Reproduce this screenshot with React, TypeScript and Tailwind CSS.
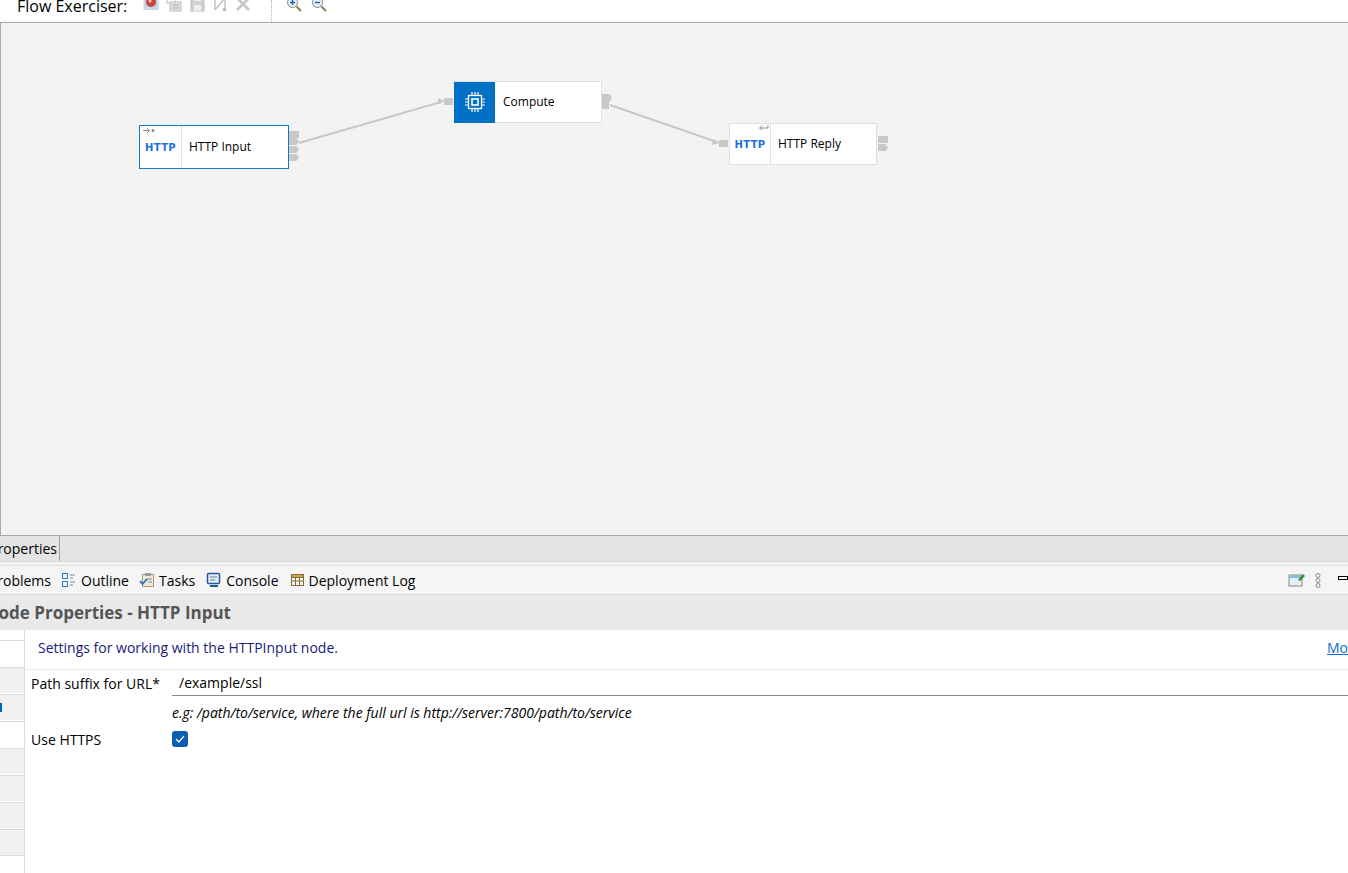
const font = { fontFamily: '"Open Sans", "Noto Sans", sans-serif' };

const DisabledIcon = ({ children }: { children: React.ReactNode }) => (
  <svg width="16" height="16" viewBox="0 0 16 16" className="shrink-0">
    {children}
  </svg>
);

const Toolbar = () => (
  <div className="h-[23px] bg-white border-b border-[#a9a9a9] overflow-hidden flex items-end relative">
    <div className="w-[4px] h-full" />
    <div className="flex items-end h-full pl-[13px] w-[268px] border-r border-dotted border-[#b5b5b5]">
      <span className="text-[16px] leading-[22px] text-black whitespace-nowrap w-[126px] mb-[5px]">Flow Exerciser:</span>
      <div className="flex gap-[7px] mb-[10px]">
        <DisabledIcon>
          <rect x="0.5" y="1" width="15" height="13" fill="#c9d5e8" />
          <circle cx="8" cy="6" r="5" fill="#c8443f" />
          <circle cx="7" cy="5" r="1.5" fill="#f4c6c2" />
        </DisabledIcon>
        <DisabledIcon>
          <rect x="1" y="1" width="8" height="6" fill="none" stroke="#bdbdbd" />
          <rect x="4" y="6" width="11" height="9" fill="#e3e3e3" stroke="#bdbdbd" />
          <path d="M6 9h7M6 12h7" stroke="#a9a9a9" />
        </DisabledIcon>
        <DisabledIcon>
          <rect x="2" y="1" width="13" height="14" fill="#d0d0d0" stroke="#bdbdbd" />
          <rect x="5" y="9" width="7" height="6" fill="#eeeeee" />
          <rect x="5" y="1" width="7" height="4" fill="#eeeeee" />
        </DisabledIcon>
        <DisabledIcon>
          <path d="M3 1v13M3 14L13 2M13 2v12" fill="none" stroke="#c4c4c4" strokeWidth="1.5" />
          <rect x="11" y="12" width="3" height="3" fill="#b5b5b5" />
        </DisabledIcon>
        <DisabledIcon>
          <path d="M3 1l5 5 5-5 2 2-5 5 5 5-2 2-5-5-5 5-2-2 5-5-5-5z" fill="#c9c9c9" />
        </DisabledIcon>
      </div>
    </div>
    <div className="flex gap-[9px] ml-[14px] mb-[10px]">
      <svg width="16" height="16" viewBox="0 0 16 16">
        <circle cx="6.5" cy="6.5" r="5" fill="#e8f0f8" stroke="#7d8790" />
        <path d="M4 6.5h5M6.5 4v5" stroke="#1f5fae" strokeWidth="1.4" />
        <path d="M10.5 10.5L15 15" stroke="#8a7a55" strokeWidth="2" />
      </svg>
      <svg width="16" height="16" viewBox="0 0 16 16">
        <circle cx="6.5" cy="6.5" r="5" fill="#e8f0f8" stroke="#7d8790" />
        <path d="M4 6.5h5" stroke="#1f5fae" strokeWidth="1.4" />
        <path d="M10.5 10.5L15 15" stroke="#8a7a55" strokeWidth="2" />
      </svg>
    </div>
  </div>
);

const Terminal = ({ className }: { className: string }) => (
  <div className={`absolute bg-[#c8c8c8] ${className}`} style={{ clipPath: "polygon(0 0, 75% 0, 100% 50%, 75% 100%, 0 100%)" }} />
);

const HttpLabel = () => (
  <span className="text-[10px] font-bold tracking-[0.3px] text-[#1f6fe0]" style={{ fontFamily: '"DejaVu Sans", sans-serif' }}>
    HTTP
  </span>
);

const FlowCanvas = () => (
  <div className="h-[512px] bg-[#f3f3f3] border-l border-[#a9a9a9] relative overflow-hidden">
    {/* wires, canvas coordinates: page y minus 23 */}
    <svg width="1347" height="512" className="absolute left-0 top-0">
      <path d="M298 120L440 79" stroke="#c8c8c8" strokeWidth="2" fill="none" />
      <path d="M437 75l7 3-7 3z" fill="#c8c8c8" />
      <path d="M609 82L716 119" stroke="#c8c8c8" strokeWidth="2" fill="none" />
      <path d="M712 116l7 4-8 2z" fill="#c8c8c8" />
    </svg>

    {/* HTTP Input */}
    <div className="absolute left-[138px] top-[102px] w-[150px] h-[44px] bg-white border border-[#0f7bd0] flex items-center text-[12px] text-black">
      <div className="w-[42px] h-full border-r border-[#e0e0e0] flex items-center justify-center relative">
        <HttpLabel />
        <svg width="16" height="7" viewBox="0 0 16 7" className="absolute left-[2px] top-[1px]">
          <path d="M1 3.5h6M5 1l2.5 2.5L5 6" stroke="#8c8c8c" fill="none" />
          <circle cx="11" cy="3.5" r="1.5" fill="#8c8c8c" />
        </svg>
      </div>
      <span className="ml-[7px]">HTTP Input</span>
    </div>
    <div className="absolute left-[288px] top-[108px] w-[10px] h-[7px] bg-[#c8c8c8]" />
    <Terminal className="left-[288px] top-[115px] w-[10px] h-[7px]" />
    <Terminal className="left-[288px] top-[123px] w-[10px] h-[7px]" />
    <Terminal className="left-[288px] top-[131px] w-[10px] h-[7px]" />

    {/* Compute */}
    <div className="absolute left-[453px] top-[58px] w-[148px] h-[42px] bg-white border border-[#e0e0e0] flex items-center text-[12px] text-black">
      <div className="w-[41px] h-[41px] -ml-px bg-[#0071c5] flex items-center justify-center">
        <svg width="22" height="22" viewBox="0 0 22 22" fill="none" stroke="white">
          <rect x="4.5" y="4.5" width="13" height="13" strokeWidth="1.3" />
          <rect x="8" y="8" width="6" height="6" strokeWidth="1.6" />
          <path d="M8 1v3M11 1v3M14 1v3M8 18v3M11 18v3M14 18v3M1 8h3M1 11h3M1 14h3M18 8h3M18 11h3M18 14h3" strokeWidth="1.2" />
        </svg>
      </div>
      <span className="ml-[8px]">Compute</span>
    </div>
    <div className="absolute left-[443px] top-[75px] w-[9px] h-[7px] bg-[#c8c8c8]" />
    <Terminal className="left-[601px] top-[71px] w-[10px] h-[8px]" />
    <div className="absolute left-[601px] top-[79px] w-[7px] h-[7px] bg-[#c8c8c8]" />

    {/* HTTP Reply */}
    <div className="absolute left-[728px] top-[100px] w-[148px] h-[42px] bg-white border border-[#e0e0e0] flex items-center text-[12px] text-black">
      <div className="w-[41px] h-full border-r border-[#e0e0e0] flex items-center justify-center relative">
        <HttpLabel />
        <svg width="11" height="9" viewBox="0 0 11 9" className="absolute right-[1px] top-0">
          <path d="M10 1v3H2M4 1.5L1.5 4 4 6.500" stroke="#8c8c8c" fill="none" />
        </svg>
      </div>
      <span className="ml-[7px]">HTTP Reply</span>
    </div>
    <div className="absolute left-[718px] top-[117px] w-[9px] h-[7px] bg-[#c8c8c8]" />
    <div className="absolute left-[877px] top-[113px] w-[10px] h-[7px] bg-[#c8c8c8]" />
    <Terminal className="left-[877px] top-[121px] w-[10px] h-[7px]" />
  </div>
);

const ViewTab = ({ icon, label, className }: { icon: React.ReactNode; label: string; className: string }) => (
  <div className={`flex items-center gap-[4px] ${className}`}>
    {icon}
    <span>{label}</span>
  </div>
);

const ViewTabs = () => (
  <div className="h-[29px] bg-[#f5f5f5] border-b border-[#dcdcdc] flex items-center text-[14px] text-black relative">
    <div className="w-[51px] overflow-hidden flex justify-end whitespace-nowrap">Problems</div>
    <ViewTab
      className="ml-[10px]"
      label="Outline"
      icon={
        <svg width="16" height="16" viewBox="0 0 16 16" fill="none">
          <rect x="1.500" y="1.500" width="5" height="5" stroke="#2f7fc4" />
          <rect x="1.500" y="9.500" width="5" height="5" stroke="#2f7fc4" />
          <path d="M9 3h5M9 6h3M9 10h5M9 13h3" stroke="#7c8a99" />
        </svg>
      }
    />
    <ViewTab
      className="ml-[10px]"
      label="Tasks"
      icon={
        <svg width="16" height="16" viewBox="0 0 16 16" fill="none">
          <rect x="3.500" y="2.500" width="11" height="12" fill="#f0e8d8" stroke="#b09a70" />
          <rect x="6" y="1" width="6" height="3" fill="#9a9a9a" />
          <path d="M8 7h5M9 10h4" stroke="#7c8a99" />
          <path d="M1 9l2.500 3L8 7" stroke="#2070c8" strokeWidth="1.800" />
        </svg>
      }
    />
    <ViewTab
      className="ml-[11px]"
      label="Console"
      icon={
        <svg width="16" height="16" viewBox="0 0 16 16" fill="none">
          <rect x="1.500" y="1.500" width="12" height="10" rx="1" fill="#e8eef5" stroke="#1f5c9e" strokeWidth="1.500" />
          <path d="M4 5h7M4 8h5" stroke="#5b7fa6" />
          <path d="M4 14h8" stroke="#1f5c9e" strokeWidth="2" />
        </svg>
      }
    />
    <ViewTab
      className="ml-[11px]"
      label="Deployment Log"
      icon={
        <svg width="15" height="14" viewBox="0 0 15 14" fill="none">
          <rect x="1.500" y="1.500" width="12" height="11" fill="#fdf8e8" stroke="#7d6c45" />
          <rect x="1.500" y="1.500" width="12" height="3" fill="#d9a040" stroke="#7d6c45" />
          <path d="M1.500 8h12M5.500 4.500v8M9.500 4.500v8" stroke="#7d6c45" />
        </svg>
      }
    />
    <div className="absolute right-0 top-0 h-full flex items-center">
      <svg width="18" height="16" viewBox="0 0 18 16" className="mr-[9px]">
        <rect x="1" y="3" width="13" height="11" fill="#e3eef8" stroke="#8a8a70" />
        <rect x="1" y="3" width="13" height="3" fill="#8fb8dc" />
        <path d="M10 8l5-6 2 2-5 5z" fill="#2f8f35" />
      </svg>
      <svg width="6" height="15" viewBox="0 0 6 15" fill="none" stroke="#8a8a8a" className="mr-[17px]">
        <circle cx="3" cy="2.500" r="2" />
        <circle cx="3" cy="7.500" r="2" />
        <circle cx="3" cy="12.500" r="2" />
      </svg>
      <div className="w-[10px] h-[4px] border border-black bg-white -mt-[4px]" />
    </div>
  </div>
);

const sideRows = [false, false, true, false, false, false, false];

const SideTabs = () => (
  <div className="w-[25px] shrink-0 border-r border-[#dcdcdc] flex flex-col">
    <div className="h-[11px] border-b border-[#dcdcdc] mb-[26px]" />
    <div className="flex flex-col gap-[1px]">
      {sideRows.map((white, i) => (
        <div
          key={i}
          className={`h-[26px] border-t border-[#dcdcdc] relative ${white ? "bg-white" : "bg-[#f0f0f0]"}`}
        >
          {i === 1 && <div className="absolute left-0 top-[8px] w-[2px] h-[9px] bg-[#0067b8]" />}
        </div>
      ))}
    </div>
    <div className="border-t border-[#dcdcdc]" />
  </div>
);

const PropertiesForm = () => (
  <div className="flex-1 min-w-0 text-[14px] text-black overflow-hidden">
    <div className="flex justify-between h-[40px] pl-[13px] pt-[8px] border-b border-[#ebebeb] whitespace-nowrap leading-[20px]">
      <span className="text-[#1a1a7e]">Settings for working with the HTTPInput node.</span>
      <span className="w-[21px] overflow-hidden text-[#0a6ed1] underline">More</span>
    </div>
    <div className="flex items-center h-[26px] pl-[6px]">
      <span className="w-[141px]">Path suffix for URL*</span>
      <div className="flex-1 h-[26px] border-b border-[#8a8a8a] pl-[7px] leading-[26px]">/example/ssl</div>
    </div>
    <div className="pl-[147px] mt-[7px] h-[20px] leading-[20px] italic whitespace-nowrap">
      e.g: /path/to/service, where the full url is http://server:7800/path/to/service
    </div>
    <div className="flex items-center h-[26px] pl-[6px] mt-[3px]">
      <span className="w-[141px]">Use HTTPS</span>
      <div className="w-[16px] h-[16px] rounded-[3px] bg-[#0b5cb5] flex items-center justify-center">
        <svg width="10" height="8" viewBox="0 0 10 8" fill="none">
          <path d="M1 4l2.800 3L9 1" stroke="white" strokeWidth="1.200" />
        </svg>
      </div>
    </div>
  </div>
);

export default function App() {
  return (
    <div className="w-[1348px] h-[873px] overflow-hidden bg-white flex flex-col" style={font}>
      <Toolbar />
      <FlowCanvas />
      {/* bottom tab strip */}
      <div className="h-[27px] bg-[#e4e4e4] border-t border-[#a9a9a9] border-b-[#dadada] border-b flex">
        <div className="w-[60px] h-[25px] border-r border-[#a0a0a0] overflow-hidden flex justify-end pr-[2px] whitespace-nowrap text-[14px] leading-[25px] text-black">
          Properties
        </div>
      </div>
      <div className="h-[4px] bg-[#f2f2f2] border-b border-[#dcdcdc]" />
      <ViewTabs />
      <div className="h-[35px] bg-[#e9e9e9] flex items-center">
        <div className="w-[231px] overflow-hidden flex justify-end whitespace-nowrap text-[17px] font-bold text-[#555555]">
          Node Properties - HTTP Input
        </div>
      </div>
      <div className="flex-1 flex min-h-0">
        <SideTabs />
        <PropertiesForm />
      </div>
    </div>
  );
}
